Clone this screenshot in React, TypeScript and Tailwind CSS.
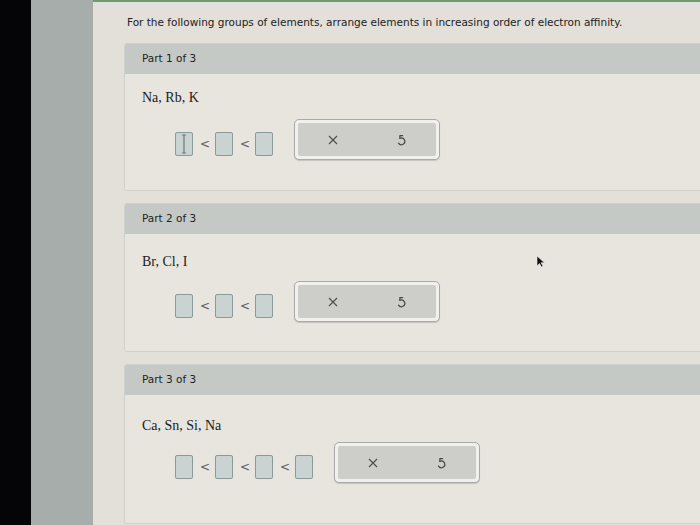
import { ReactNode } from 'react';

const sans = { fontFamily: '"DejaVu Sans", Verdana, sans-serif' };
const serif = { fontFamily: '"Liberation Serif", "Times New Roman", serif' };

function Box({ active = false }: { active?: boolean }) {
  return (
    <div className="relative flex h-[24px] w-[18px] items-center justify-center rounded-[2px] border-[1.5px] border-[#8d9a99] bg-[#c9d3d2]">
      {active && (
        <svg width="6" height="20" viewBox="0 0 6 20" className="text-[#6b7676]">
          <path d="M1 1h4M3 1v18M1 19h4" stroke="currentColor" strokeWidth="1.2" fill="none" />
        </svg>
      )}
    </div>
  );
}

function Lt() {
  return <span className="w-[8px] text-center text-[12px] leading-none text-[#5a5a5a]" style={sans}>&lt;</span>;
}

function UndoIcon() {
  return (
    <svg width="11" height="12" viewBox="0 0 11 12" fill="none" stroke="#474747" strokeWidth="1.25" strokeLinecap="round" strokeLinejoin="round">
      <path d="M6.6 1.6H3.9V4.3" />
      <path d="M3.9 4.3A3.4 3.4 0 1 1 2.5 9.2" />
    </svg>
  );
}

function AnswerRow({ count, active = false }: { count: number; active?: boolean }) {
  const items: ReactNode[] = [];
  for (let i = 0; i < count; i++) {
    if (i > 0) items.push(<Lt key={'lt' + i} />);
    items.push(<Box key={'b' + i} active={active && i === 0} />);
  }
  return (
    <div className="ml-[50px] flex items-center gap-[21px]">
      <div className="flex items-center gap-[7px] pt-[8px]">{items}</div>
      <div className="h-[41px] w-[146px] rounded-[5px] border-[1.5px] border-[#a9aaa7] bg-[#f1f0ed] p-[3px] shadow-[0_1px_1px_rgba(0,0,0,0.15)]">
        <div className="grid h-full grid-cols-2 items-center rounded-[2px] bg-[#cdcdca]">
          <div className="flex justify-center">
            <svg width="10" height="10" viewBox="0 0 10 10" stroke="#4d4d4d" strokeWidth="1.1">
              <path d="M1 1l8 8M9 1l-8 8" />
            </svg>
          </div>
          <div className="flex justify-center">
            <UndoIcon />
          </div>
        </div>
      </div>
    </div>
  );
}

function Part({
  label,
  elements,
  count,
  active,
  bodyH,
  textPt,
  rowMt,
  children,
}: {
  label: string;
  elements: string;
  count: number;
  active?: boolean;
  bodyH: number;
  textPt: string;
  rowMt: string;
  children?: ReactNode;
}) {
  return (
    <div className="w-[600px] overflow-hidden rounded-[3px] border border-[#cfcfcb]">
      <div className="flex h-[30px] items-center bg-[#c5c9c5] pl-[17px] text-[10.5px] text-[#222]" style={sans}>
        {label}
      </div>
      <div className="relative bg-[#e8e5df]" style={{ height: bodyH }}>
        <div className={'pl-[17px] text-[14px] leading-[20px] text-[#1c1c1c] ' + textPt} style={serif}>
          {elements}
        </div>
        <div className={rowMt}>
          <AnswerRow count={count} active={active} />
        </div>
        {children}
      </div>
    </div>
  );
}

export default function App() {
  return (
    <div className="flex h-[525px] w-[700px] overflow-hidden">
      <div className="w-[31px] shrink-0 bg-[#050507]" />
      <div className="w-[62px] shrink-0 bg-[#a7adab]" />
      <div className="flex-1 overflow-hidden border-t-2 border-[#6f9a70] bg-[#e3dfd9] pl-[31px]">
        <p className="mt-[13px] pl-[3px] text-[10.5px] leading-[14px] text-[#222]" style={sans}>
          For the following groups of elements, arrange elements in increasing order of electron affinity.
        </p>
        <div className="mt-[14px] flex flex-col gap-[12px]">
          <Part label="Part 1 of 3" elements="Na, Rb, K" count={3} active bodyH={116} textPt="pt-[14px]" rowMt="mt-[11px]" />
          <Part label="Part 2 of 3" elements="Br, Cl, I" count={3} bodyH={117} textPt="pt-[18px]" rowMt="mt-[9px]">
            <svg width="9" height="13" viewBox="0 0 9 13" className="absolute left-[411px] top-[21px]">
              <path d="M1 1v10l2.5-2.5 2 3.5 1.5-1-2-3.2H8.5z" fill="#111" stroke="#eee" strokeWidth="0.6" />
            </svg>
          </Part>
          <Part label="Part 3 of 3" elements="Ca, Sn, Si, Na" count={4} bodyH={128} textPt="pt-[21px]" rowMt="mt-[6px]" />
        </div>
      </div>
    </div>
  );
}
